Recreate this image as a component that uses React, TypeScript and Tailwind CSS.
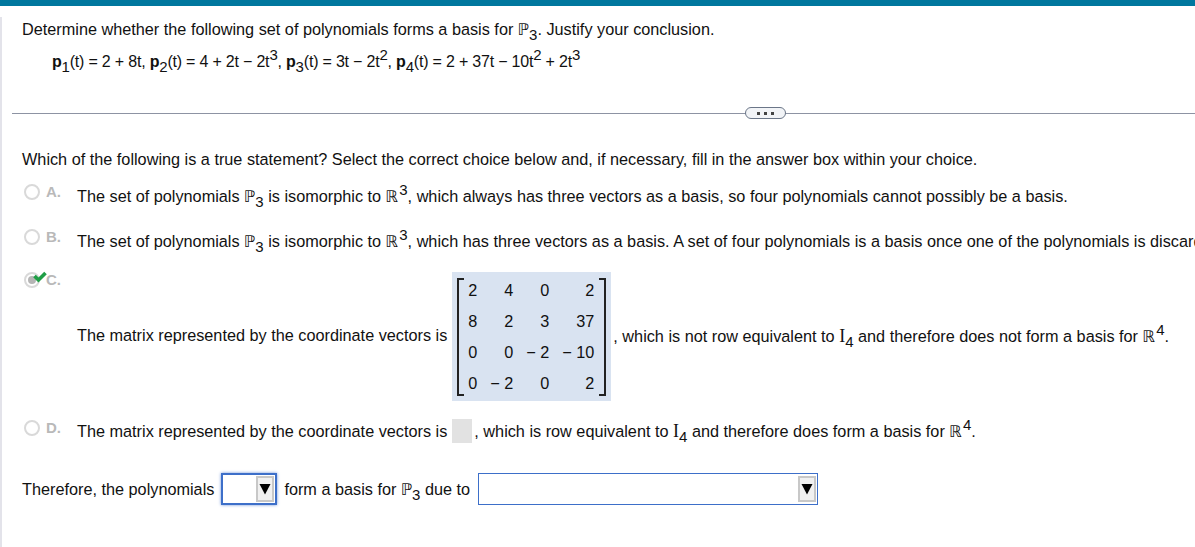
function Sub({ children }: { children: React.ReactNode }) {
  return <span className="align-[-5px] text-[15px] leading-none">{children}</span>;
}

function Sup({ children }: { children: React.ReactNode }) {
  return <span className="align-[7px] text-[15px] leading-none">{children}</span>;
}

function Bb({ children }: { children: React.ReactNode }) {
  return <span className="font-['DejaVu_Sans',sans-serif] text-[16px]">{children}</span>;
}

function P3() {
  return (
    <span>
      <Bb>ℙ</Bb>
      <Sub>3</Sub>
    </span>
  );
}

function R({ n }: { n: number }) {
  return (
    <span>
      <Bb>ℝ</Bb>
      <span className="ml-px">
        <Sup>{n}</Sup>
      </span>
    </span>
  );
}

function I4() {
  return (
    <span>
      <span className="font-['Liberation_Serif',serif] text-[18px]">I</span>
      <Sub>4</Sub>
    </span>
  );
}

function Radio({ checked }: { checked?: boolean }) {
  return (
    <span className="relative flex h-[16px] w-[16px] shrink-0 items-center justify-center rounded-full border-2 border-[#d9d9d9] bg-white">
      {checked && <span className="h-[8px] w-[8px] rounded-full bg-[#b5b5b5]" />}
      {checked && (
        <svg className="absolute left-[7px] top-[-3px]" width="14" height="12" viewBox="0 0 14 12">
          <path d="M1.5 5 L5.5 9 L12.5 2" fill="none" stroke="#1f9e45" strokeWidth="3.6" />
        </svg>
      )}
    </span>
  );
}

function Choice({ label, checked, children }: { label: string; checked?: boolean; children?: React.ReactNode }) {
  return (
    <div className="flex h-[24px] items-center whitespace-nowrap">
      <div className="ml-[22px] flex w-[53px] shrink-0 -translate-y-[3px] items-center">
        <Radio checked={checked} />
        <span className="ml-[6px] text-[15px] font-bold text-[#b9b9b9]">{label}</span>
      </div>
      {children}
    </div>
  );
}

function Select({ className }: { className: string }) {
  return (
    <div className={`flex items-center justify-end bg-white pr-[1px] ${className}`}>
      <div className="flex h-[26px] w-[18px] items-center justify-center border-2 border-[#c8c8c8] bg-[#f1f1f1]">
        <svg width="12" height="12" viewBox="0 0 12 12">
          <path d="M0.5 1 H11.5 L6 11.5 Z" fill="#000" />
        </svg>
      </div>
    </div>
  );
}

const MATRIX = [
  ['2', '4', '0', '2'],
  ['8', '2', '3', '37'],
  ['0', '0', '− 2', '− 10'],
  ['0', '− 2', '0', '2'],
];

function Matrix() {
  return (
    <div className="ml-[5px] mr-[2px] flex h-[129px] w-[159px] shrink-0 items-center justify-center bg-[#d9e3f1] px-[5px]">
      <div className="h-[118px] w-[7px] shrink-0 border-y-2 border-l-2 border-[#222]" />
      <div className="grid grow grid-cols-[13px_36px_36px_45px]">
        {MATRIX.flat().map((v, i) => (
          <div key={i} className="flex h-[31px] items-center justify-end whitespace-nowrap">
            {v}
          </div>
        ))}
      </div>
      <div className="h-[118px] w-[7px] shrink-0 border-y-2 border-r-2 border-[#222]" />
    </div>
  );
}

export default function App() {
  return (
    <div className="h-[547px] w-[1195px] overflow-hidden bg-white font-['Liberation_Sans',Arial,sans-serif] text-[16.25px] text-[#111]">
      <div className="h-[6px] bg-[#00779e]" />
      <div className="h-[541px] border-l-2 border-[#e3e3ea]">
        <div className="ml-[20px] mt-[11px] flex h-[24px] items-center whitespace-nowrap">
          <span>
            Determine whether the following set of polynomials forms a basis for <P3 />. Justify your conclusion.
          </span>
        </div>
        <div className="ml-[50px] mt-[7px] flex h-[24px] items-center whitespace-nowrap text-[16px] tracking-[-0.2px]">
          <span>
            <b>p</b><Sub>1</Sub>(t) = 2 + 8t, <b>p</b><Sub>2</Sub>(t) = 4 + 2t − 2t<Sup>3</Sup>,{' '}
            <b>p</b><Sub>3</Sub>(t) = 3t − 2t<Sup>2</Sup>, <b>p</b><Sub>4</Sub>(t) = 2 + 37t − 10t<Sup>2</Sup> + 2t<Sup>3</Sup>
          </span>
        </div>

        <div className="relative ml-[10px] mt-[41px] h-px bg-[#8d93a3]">
          <div className="absolute left-[733px] top-[-6px] flex h-[12px] w-[41px] items-center justify-center gap-[4px] rounded-[6px] border border-[#6b7688] bg-[#f2f4f7]">
            <span className="h-[3px] w-[3px] bg-[#444]" />
            <span className="h-[3px] w-[3px] bg-[#444]" />
            <span className="h-[3px] w-[3px] bg-[#444]" />
          </div>
        </div>

        <div className="ml-[20px] mt-[33px] flex h-[24px] items-center whitespace-nowrap">
          Which of the following is a true statement? Select the correct choice below and, if necessary, fill in the answer box within your choice.
        </div>

        <div className="mt-[12px]">
          <Choice label="A.">
            <span>
              The set of polynomials <P3 /> is isomorphic to <R n={3} />, which always has three vectors as a basis, so four polynomials cannot possibly be a basis.
            </span>
          </Choice>
        </div>
        <div className="mt-[21px]">
          <Choice label="B.">
            <span>
              The set of polynomials <P3 /> is isomorphic to <R n={3} />, which has three vectors as a basis. A set of four polynomials is a basis once one of the polynomials is discarded.
            </span>
          </Choice>
        </div>
        <div className="mt-[19px]">
          <Choice label="C." checked />
        </div>
        <div className="ml-[75px] mt-[-23px] flex items-center whitespace-nowrap">
          <span className="-translate-y-px">The matrix represented by the coordinate vectors is</span>
          <Matrix />
          <span className="-translate-y-px">
            , which is not row equivalent to <I4 /> and therefore does not form a basis for <R n={4} />.
          </span>
        </div>
        <div className="mt-[18px]">
          <Choice label="D.">
            <span>The matrix represented by the coordinate vectors is</span>
            <span className="ml-[5px] mr-[2px] h-[24px] w-[20px] bg-[#e2e2e2]" />
            <span>
              , which is row equivalent to <I4 /> and therefore does form a basis for <R n={4} />.
            </span>
          </Choice>
        </div>
        <div className="ml-[20px] mt-[30px] flex items-center whitespace-nowrap">
          <span>Therefore, the polynomials</span>
          <Select className="ml-[7px] h-[32px] w-[56px] border-2 border-[#3d6fc9] shadow-[0_0_3px_#6f93d8]" />
          <span className="ml-[7px] mr-[8px]">
            form a basis for <P3 /> due to
          </span>
          <Select className="h-[32px] w-[340px] border border-[#3d6fc9]" />
        </div>
      </div>
    </div>
  );
}
